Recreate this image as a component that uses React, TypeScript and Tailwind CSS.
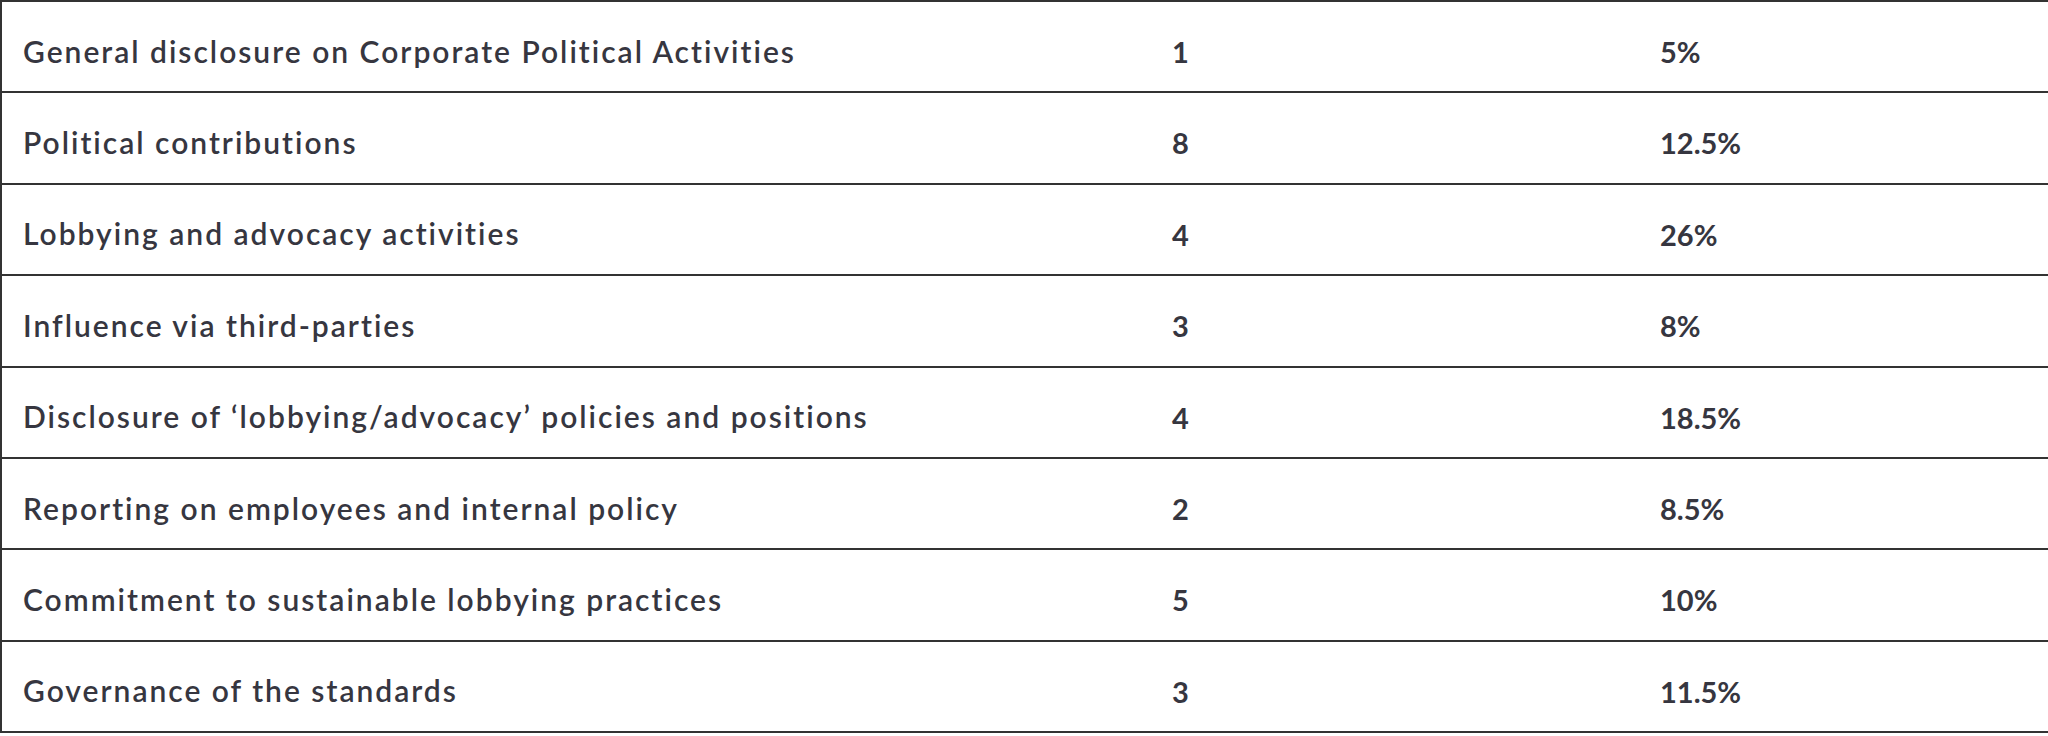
import React from "react";

const rows: [string, string, string][] = [
  ["General disclosure on Corporate Political Activities", "1", "5%"],
  ["Political contributions", "8", "12.5%"],
  ["Lobbying and advocacy activities", "4", "26%"],
  ["Influence via third-parties", "3", "8%"],
  ["Disclosure of \u2018lobbying/advocacy\u2019 policies and positions", "4", "18.5%"],
  ["Reporting on employees and internal policy", "2", "8.5%"],
  ["Commitment to sustainable lobbying practices", "5", "10%"],
  ["Governance of the standards", "3", "11.5%"],
];

export default function App() {
  return (
    <div className="w-[2048px] h-[736px] overflow-hidden bg-white">
      <div className="w-[2060px] border-l-2 border-t-2 border-[#333333] text-[#363640]">
        {rows.map(([a, b, c], i) => (
          <div
            key={i}
            className="grid grid-cols-[1147px_488px_1fr] h-[91.4px] border-b-2 border-[#333333] items-center"
          >
            <div className="pl-[21px] pt-[9px] text-[30px] font-semibold font-['Lato',sans-serif] tracking-[2px]">
              {a}
            </div>
            <div className="pl-[23px] pt-[10px] text-[29px] font-bold font-['Lato',sans-serif]">{b}</div>
            <div className="pl-[23px] pt-[10px] text-[29px] font-bold font-['Lato',sans-serif]">{c}</div>
          </div>
        ))}
      </div>
    </div>
  );
}
